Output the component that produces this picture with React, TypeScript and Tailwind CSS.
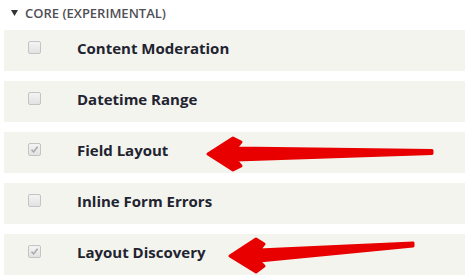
import React from 'react';

type Module = { name: string; checked: boolean };

const modules: Module[] = [
  { name: 'Content Moderation', checked: false },
  { name: 'Datetime Range', checked: false },
  { name: 'Field Layout', checked: true },
  { name: 'Inline Form Errors', checked: false },
  { name: 'Layout Discovery', checked: true },
];

function Checkbox({ checked }: { checked: boolean }) {
  return (
    <span className="flex h-[13px] w-[13px] items-center justify-center rounded-[2px] border border-[#c4c4c4] bg-gradient-to-b from-[#f4f4f4] to-[#e2e2e2]">
      {checked && (
        <svg width="9" height="9" viewBox="0 0 9 9">
          <path d="M1.5 4.8 L3.6 6.9 L7.6 1.8" fill="none" stroke="#a9a9a9" strokeWidth="1.6" />
        </svg>
      )}
    </span>
  );
}

export default function App() {
  return (
    <div className="relative h-[278px] w-[465px] overflow-hidden bg-white font-['Open_Sans',sans-serif]">
      {/* Details summary */}
      <div className="flex h-[30px] items-center gap-[7px] pl-[11px] pb-[3px] text-[13px] font-semibold uppercase text-[#4f5055]">
        <svg width="7" height="6" viewBox="0 0 7 6" className="-translate-y-[1px]">
          <path d="M0 0 H7 L3.5 6 Z" fill="#333" />
        </svg>
        <span>Core (Experimental)</span>
      </div>

      {/* Module rows */}
      <div className="flex flex-col gap-[10px] pl-[4px]">
        {modules.map((m) => (
          <div key={m.name} className="flex h-[41px] items-center bg-[#f3f4ee]">
            <div className="flex w-[73px] -translate-y-[3px] pl-[24px]">
              <Checkbox checked={m.checked} />
            </div>
            <span className="-translate-y-[2px] text-[15px] font-bold text-[#222330]">{m.name}</span>
          </div>
        ))}
      </div>

      {/* Annotation arrows */}
      <svg className="pointer-events-none absolute left-0 top-0" width="465" height="278">
        <polygon
          points="208,154 233,138 241,142 236,148 432,150.5 432,153.5 236,160 241,166 233,170"
          fill="#e80000"
          stroke="#e80000"
          strokeWidth="3"
          strokeLinejoin="round"
        />
        <polygon
          points="230,256 256,239 264,244 259,250 413,243 413,246 259,261 264,266 256,272"
          fill="#e80000"
          stroke="#e80000"
          strokeWidth="3"
          strokeLinejoin="round"
        />
      </svg>
    </div>
  );
}
